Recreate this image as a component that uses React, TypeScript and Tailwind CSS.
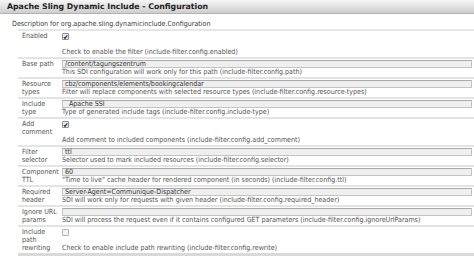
import React from 'react'

type Row = {
  label: string[]
  kind: 'check' | 'text' | 'select'
  value?: string
  checked?: boolean
  help: string
}

const rows: Row[] = [
  { label: ['Enabled'], kind: 'check', checked: true, help: 'Check to enable the filter (include-filter.config.enabled)' },
  { label: ['Base path'], kind: 'text', value: '/content/tagungszentrum', help: 'This SDI configuration will work only for this path (include-filter.config.path)' },
  { label: ['Resource', 'types'], kind: 'text', value: 'cbz/components/elements/bookingcalendar', help: 'Filter will replace components with selected resource types (include-filter.config.resource-types)' },
  { label: ['Include', 'type'], kind: 'select', value: 'Apache SSI', help: 'Type of generated include tags (include-filter.config.include-type)' },
  { label: ['Add', 'comment'], kind: 'check', checked: true, help: 'Add comment to included components (include-filter.config.add_comment)' },
  { label: ['Filter', 'selector'], kind: 'text', value: 'ttl', help: 'Selector used to mark included resources (include-filter.config.selector)' },
  { label: ['Component', 'TTL'], kind: 'text', value: '60', help: '"Time to live" cache header for rendered component (in seconds) (include-filter.config.ttl)' },
  { label: ['Required', 'header'], kind: 'text', value: 'Server-Agent=Communique-Dispatcher', help: 'SDI will work only for requests with given header (include-filter.config.required_header)' },
  { label: ['Ignore URL', 'params'], kind: 'text', value: '', help: 'SDI will process the request even if it contains configured GET parameters (include-filter.config.ignoreUrlParams)' },
  { label: ['Include', 'path', 'rewriting'], kind: 'check', checked: false, help: 'Check to enable include path rewriting (include-filter.config.rewrite)' },
]

function Check({ on }: { on?: boolean }) {
  return (
    <span
      className={
        'flex h-[7px] w-[7px] items-center justify-center rounded-[1px] border ' +
        (on ? 'border-[#8a8f99] bg-[#e9edf3]' : 'border-[#b4b4b4] bg-[#f3f3f3]')
      }
    >
      {on && (
        <svg viewBox="0 0 8 8" className="h-[6px] w-[6px]">
          <path d="M1.3 4.3 L3.2 6.2 L6.8 1.5" fill="none" stroke="#222" strokeWidth="1.7" />
        </svg>
      )}
    </span>
  )
}

export default function App() {
  return (
    <div
      className="h-[258px] w-[474px] overflow-hidden bg-white text-[7.05px] leading-[8px] text-[#555]"
      style={{ fontFamily: '"DejaVu Sans", Verdana, sans-serif', fontStretch: 'condensed' }}
    >
      {/* title bar */}
      <div
        className="flex h-[14px] items-center border-b border-[#b3b3b3] bg-gradient-to-b from-[#f6f6f6] to-[#cecece] pl-[7px] text-[7.8px] font-bold text-[#1e1e1e]"
        style={{ fontStretch: 'normal' }}
      >
        Apache Sling Dynamic Include - Configuration
      </div>

      <div className="h-[15px] pl-[12px] pt-[6px] text-[#3c3c3c]">
        Description for org.apache.sling.dynamicinclude.Configuration
      </div>

      <div className="ml-[18px] border-t-2 border-[#e6e6e6] border-b-[3px] border-b-[#d9d9d9]">
        {rows.map((r, i) => (
          <div
            key={i}
            className={
              'grid grid-cols-[44px_1fr] ' + (i < rows.length - 1 ? 'border-b-2 border-[#e4e4e4]' : '')
            }
          >
            <div className="pl-[4px] pt-[1px] pb-[1px]">
              {r.label.map((l) => (
                <div key={l}>{l}</div>
              ))}
            </div>
            <div className="pr-[2px] pt-[1px] pb-[1px]">
              {r.kind === 'check' ? (
                <div className="flex h-[16px] items-start pt-[1px]">
                  <Check on={r.checked} />
                </div>
              ) : (
                <div className="flex h-[8px] items-center border border-[#c4c4c4] border-t-[#a9a9a9] bg-[#efefef] pl-[2px] text-[#333]">
                  {r.kind === 'select' ? <span className="pl-[4px]">{r.value}</span> : r.value}
                </div>
              )}
              <div className="whitespace-nowrap">{r.help}</div>
            </div>
          </div>
        ))}
      </div>
    </div>
  )
}
